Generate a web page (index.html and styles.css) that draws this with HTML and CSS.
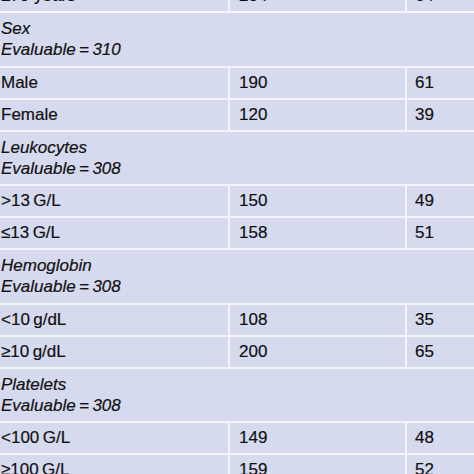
FILE: index.html
```html
<!DOCTYPE html>
<html>
<head>
<meta charset="utf-8">
<link rel="stylesheet" href="styles.css">
</head>
<body>
<div class="table">
  <div class="cell c1">≥70 years</div><div class="cell c2">204</div><div class="cell c3">64</div>

  <div class="head"><span>Sex</span><span>Evaluable&thinsp;=&thinsp;310</span></div>
  <div class="cell c1">Male</div><div class="cell c2">190</div><div class="cell c3">61</div>
  <div class="cell c1">Female</div><div class="cell c2">120</div><div class="cell c3">39</div>

  <div class="head"><span>Leukocytes</span><span>Evaluable&thinsp;=&thinsp;308</span></div>
  <div class="cell c1">&gt;13&thinsp;G/L</div><div class="cell c2">150</div><div class="cell c3">49</div>
  <div class="cell c1">≤13&thinsp;G/L</div><div class="cell c2">158</div><div class="cell c3">51</div>

  <div class="head"><span>Hemoglobin</span><span>Evaluable&thinsp;=&thinsp;308</span></div>
  <div class="cell c1">&lt;10&thinsp;g/dL</div><div class="cell c2">108</div><div class="cell c3">35</div>
  <div class="cell c1">≥10&thinsp;g/dL</div><div class="cell c2">200</div><div class="cell c3">65</div>

  <div class="head"><span>Platelets</span><span>Evaluable&thinsp;=&thinsp;308</span></div>
  <div class="cell c1">&lt;100&thinsp;G/L</div><div class="cell c2">149</div><div class="cell c3">48</div>
  <div class="cell c1">≥100&thinsp;G/L</div><div class="cell c2">159</div><div class="cell c3">52</div>
</div>
</body>
</html>
```

FILE: styles.css
```css
html, body {
  margin: 0;
  padding: 0;
  background: #ffffff;
  overflow: hidden;
}
.table {
  display: grid;
  grid-template-columns: 228px 175px 1fr;
  gap: 2px;
  margin-top: -19px;
  background: #f4f5fb;
  font-family: "Liberation Sans", Arial, sans-serif;
  font-size: 17px;
  color: #111111;
  -webkit-text-stroke: 0.2px #111111;
}
.cell {
  height: 30px;
  display: flex;
  align-items: center;
  background: #d6daef;
}
.c1 { padding-left: 1px; }
.c2 { padding-left: 9px; }
.c3 { padding-left: 8px; }
.head {
  grid-column: 1 / -1;
  height: 52.5px;
  display: flex;
  flex-direction: column;
  justify-content: center;
  padding-left: 1px;
  background: #d6daef;
  font-style: italic;
  line-height: 21px;
}
```
